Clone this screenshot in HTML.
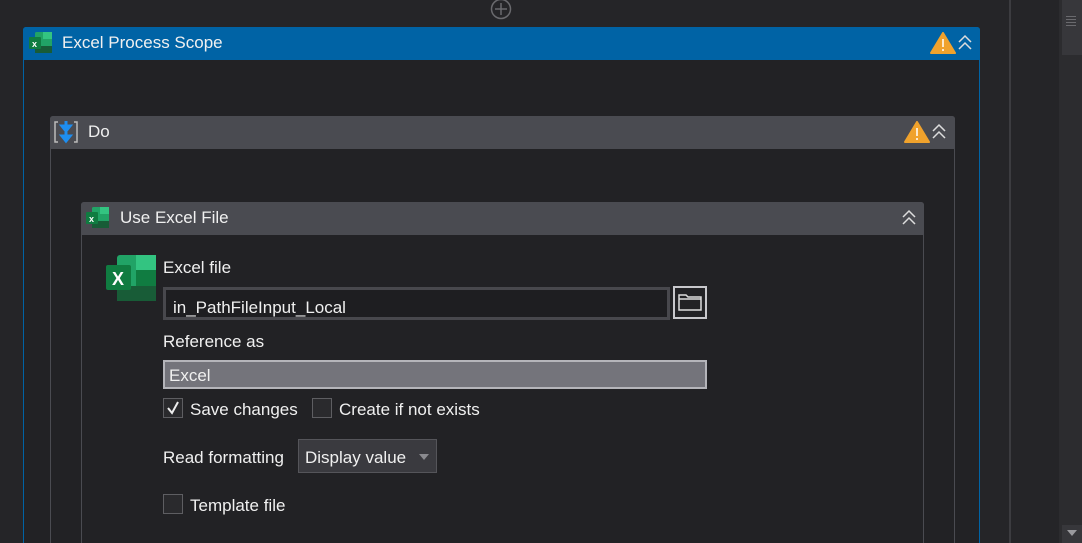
<!DOCTYPE html>
<html style="overflow:hidden;width:1082px;height:543px"><head><style>
*{margin:0;padding:0;box-sizing:border-box}
body{width:1082px;height:543px;background:#252528;position:relative;overflow:hidden;font-family:"Segoe UI","Liberation Sans",sans-serif;color:#f0f0f0}
.a{position:absolute}
.t{font-size:17px;line-height:20px;white-space:nowrap}
.cb{position:absolute;width:20px;height:20px;border:1px solid #5e5e62;background:#2a2a2d}
</style></head><body>
<div class="a" style="left:1009px;top:0;width:2px;height:543px;background:#3c3c40"></div>
<div class="a" style="left:1059px;top:0;width:23px;height:543px;background:#2c2c2f"></div>
<div class="a" style="left:1062px;top:0;width:20px;height:55px;background:#37373b"></div>
<div class="a" style="left:1066px;top:16px;width:10px;height:10px;background:repeating-linear-gradient(#6a6a6e 0 1px,transparent 1px 3px)"></div>
<div class="a" style="left:1062px;top:525px;width:20px;height:18px;background:#37373b"></div>
<svg class="a" style="left:1067px;top:529px" width="10" height="8"><path d="M0 1H10L5 7Z" fill="#9a9a9e"/></svg>

<svg class="a" style="left:490px;top:-2px" width="22" height="22"><circle cx="11" cy="11" r="9.5" fill="none" stroke="#6a6a6e" stroke-width="1.5"/><path d="M11 5V17M5 11H17" stroke="#6a6a6e" stroke-width="1.5"/></svg>
<svg class="a" style="left:492px;top:173px" width="22" height="22"><circle cx="11" cy="11" r="9.5" fill="none" stroke="#6a6a6e" stroke-width="1.5"/><path d="M11 5V17M5 11H17" stroke="#6a6a6e" stroke-width="1.5"/></svg>

<div class="a" style="left:23px;top:27px;width:957px;height:516px;border:1px solid #0063a5;border-bottom:none;border-radius:3px 3px 0 0;background:#222225"></div>
<div class="a" style="left:23px;top:27px;width:957px;height:33px;background:#0063a5;border-radius:3px 3px 0 0"></div>
<svg class="a" style="left:29px;top:32px" width="24" height="22"><rect x="6" y="0" width="17" height="21" rx="1.5" fill="#21a366"/><rect x="14" y="0" width="9" height="7" fill="#33c481"/><rect x="6" y="14" width="17" height="7" fill="#185c37"/><rect x="0" y="5" width="12" height="12" rx="1" fill="#107c41"/><text x="3" y="15" font-size="9" font-weight="bold" fill="#fff" font-family="Liberation Sans">x</text></svg>
<div class="a t" style="left:62px;top:33px">Excel Process Scope</div>
<svg class="a" style="left:930px;top:32px" width="26" height="22"><path d="M13 1L25 21H1Z" fill="#f0a22c" stroke="#f0a22c" stroke-linejoin="round" stroke-width="2"/><path d="M13 7V15M13 17V19" stroke="#fff" stroke-width="1.5"/></svg>
<svg class="a" style="left:957px;top:34px" width="16" height="16"><path d="M2 8L8 2L14 8M2 15L8 9L14 15" fill="none" stroke="#ddd" stroke-width="1.5"/></svg>

<div class="a" style="left:50px;top:116px;width:905px;height:427px;border:1px solid #4a4b51;border-bottom:none;border-radius:3px 3px 0 0;background:#222225"></div>
<div class="a" style="left:50px;top:116px;width:905px;height:33px;background:#4a4b51;border-radius:3px 3px 0 0"></div>
<svg class="a" style="left:52px;top:120px" width="28" height="24"><path d="M6 2H3V22H6M22 2H25V22H22" fill="none" stroke="#bbb" stroke-width="1.5"/><path d="M14 1V7M10 6L14 11L18 6Z M14 12V17M10 16L14 21L18 16Z" fill="#1e8ef0" stroke="#1e8ef0" stroke-width="3"/></svg>
<div class="a t" style="left:88px;top:122px">Do</div>
<svg class="a" style="left:904px;top:121px" width="26" height="22"><path d="M13 1L25 21H1Z" fill="#f0a22c" stroke="#f0a22c" stroke-linejoin="round" stroke-width="2"/><path d="M13 7V15M13 17V19" stroke="#fff" stroke-width="1.5"/></svg>
<svg class="a" style="left:931px;top:123px" width="16" height="16"><path d="M2 8L8 2L14 8M2 15L8 9L14 15" fill="none" stroke="#ddd" stroke-width="1.5"/></svg>

<div class="a" style="left:81px;top:202px;width:843px;height:341px;border:1px solid #4a4b51;border-bottom:none;border-radius:3px 3px 0 0;background:#222225"></div>
<div class="a" style="left:81px;top:202px;width:843px;height:33px;background:#4a4b51;border-radius:3px 3px 0 0"></div>
<svg class="a" style="left:86px;top:207px" width="24" height="22"><rect x="6" y="0" width="17" height="21" rx="1.5" fill="#21a366"/><rect x="14" y="0" width="9" height="7" fill="#33c481"/><rect x="6" y="14" width="17" height="7" fill="#185c37"/><rect x="0" y="5" width="12" height="12" rx="1" fill="#107c41"/><text x="3" y="15" font-size="9" font-weight="bold" fill="#fff" font-family="Liberation Sans">x</text></svg>
<div class="a t" style="left:120px;top:208px">Use Excel File</div>
<svg class="a" style="left:901px;top:209px" width="16" height="16"><path d="M2 8L8 2L14 8M2 15L8 9L14 15" fill="none" stroke="#ddd" stroke-width="1.5"/></svg>

<svg class="a" style="left:106px;top:255px" width="50" height="46"><rect x="11" y="0" width="39" height="46" rx="3" fill="#21a366"/><rect x="30" y="0" width="20" height="15" fill="#33c481"/><rect x="11" y="31" width="39" height="15" fill="#185c37"/><rect x="30" y="15" width="20" height="16" fill="#107c41"/><rect x="0" y="10" width="25" height="25" rx="2" fill="#107c41"/><text x="6" y="30" font-size="18" font-weight="bold" fill="#fff" font-family="Liberation Sans">X</text></svg>

<div class="a t" style="left:163px;top:258px">Excel file</div>
<div class="a" style="left:163px;top:287px;width:507px;height:33px;border:3px solid #48484d;background:#1e1e21;overflow:hidden"><div class="t" style="position:absolute;left:7px;top:8px">in_PathFileInput_Local</div></div>
<div class="a" style="left:673px;top:286px;width:34px;height:33px;border:2px solid #c8c8cc;background:#222225"></div>
<svg class="a" style="left:678px;top:293px" width="24" height="19"><path d="M1 17V2H8L10 4H23V17Z M1 6H23" fill="none" stroke="#ddd" stroke-width="1.5"/></svg>

<div class="a t" style="left:163px;top:332px">Reference as</div>
<div class="a" style="left:163px;top:360px;width:544px;height:29px;border:2px solid #b5b5ba;background:#74747b"><div class="t" style="position:absolute;left:4px;top:4px">Excel</div></div>

<div class="cb" style="left:163px;top:398px"></div>
<svg class="a" style="left:165px;top:400px" width="16" height="16"><path d="M3 8L7 13L13 2" fill="none" stroke="#eee" stroke-width="2"/></svg>
<div class="a t" style="left:190px;top:400px">Save changes</div>
<div class="cb" style="left:312px;top:398px"></div>
<div class="a t" style="left:339px;top:400px">Create if not exists</div>

<div class="a t" style="left:163px;top:448px">Read formatting</div>
<div class="a" style="left:298px;top:439px;width:139px;height:34px;border:1px solid #55555a;background:#3a3a3f"></div>
<div class="a t" style="left:305px;top:448px">Display value</div>
<svg class="a" style="left:419px;top:454px" width="10" height="6"><path d="M0 0H10L5 6Z" fill="#8a8a8f"/></svg>

<div class="cb" style="left:163px;top:494px"></div>
<div class="a t" style="left:190px;top:496px">Template file</div>
</body></html>
